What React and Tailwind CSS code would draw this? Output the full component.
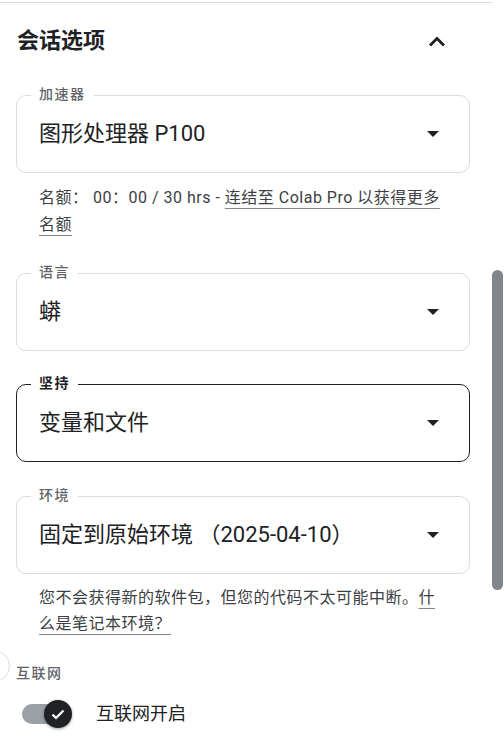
const FONT = { fontFamily: "Roboto, 'Noto Sans CJK SC', sans-serif" };

function DropArrow() {
  return (
    <svg width="14" height="8" viewBox="0 0 14 8" className="shrink-0">
      <path d="M1 1h12L7 7z" fill="#202124" />
    </svg>
  );
}

function Field({ label, value, active }) {
  return (
    <div
      className={
        'relative h-[78px] rounded-[10px] border flex items-center justify-between pl-[22px] pr-[29px] ' +
        (active ? 'border-[#202124]' : 'border-[#dadce0]')
      }
    >
      <span
        className={
          'absolute left-[14px] top-[-11px] bg-white px-2 text-[14px] leading-[18px] tracking-[1.5px] ' +
          (active ? 'text-[#202124] font-bold' : 'text-[#5f6368] font-medium')
        }
      >
        {label}
      </span>
      <span className="text-[22px] leading-[28px] text-[#202124]">{value}</span>
      <DropArrow />
    </div>
  );
}

export default function App() {
  return (
    <div className="relative w-[504px] h-[738px] overflow-hidden bg-white" style={FONT}>
      <div className="mt-[2px] h-px w-[492px] bg-[#dadce0]" />

      <div className="mt-[24px] h-[28px] flex items-center justify-between pl-[17px] pr-[55px]">
        <h2 className="text-[22px] leading-[28px] font-bold text-[#202124]">会话选项</h2>
        <svg width="24" height="24" viewBox="0 0 24 24">
          <path d="M5 16.5l7-7 7 7" fill="none" stroke="#202124" strokeWidth="2.8" />
        </svg>
      </div>

      <div className="pl-[16px] pr-[34px]">
        <div className="mt-[40px]">
          <Field label="加速器" value="图形处理器 P100" />
        </div>
        <p className="mt-[11px] px-[23px] text-[16px] leading-[27px] tracking-[0.5px] text-[#3c4043]">
          名额： 00：00 / 30 hrs -{' '}
          <span className="underline decoration-[#80868b] underline-offset-[5px]">连结至 Colab Pro 以获得更多名额</span>
        </p>

        <div className="mt-[35px]">
          <Field label="语言" value="蟒" />
        </div>
        <div className="mt-[33px]">
          <Field label="坚持" value="变量和文件" active />
        </div>
        <div className="mt-[34px]">
          <Field label="环境" value="固定到原始环境 （2025-04-10）" />
        </div>
        <p className="mt-[11px] px-[23px] text-[16px] leading-[26px] tracking-[0.5px] text-[#3c4043]">
          您不会获得新的软件包，但您的代码不太可能中断。
          <span className="underline decoration-[#80868b] underline-offset-[5px]">什么是笔记本环境？</span>
        </p>
      </div>

      <div className="mt-[27px] pl-[16px] text-[14px] leading-[18px] tracking-[1.5px] font-medium text-[#5f6368]">
        互联网
      </div>

      <div className="mt-[18px] flex items-center pl-[22px]">
        <div className="relative w-[50px] h-[28px]">
          <div className="absolute left-0 top-[4px] w-[44px] h-[20px] rounded-full bg-[#9aa0a6]" />
          <div className="absolute left-[22px] top-0 w-[28px] h-[28px] rounded-full bg-[#202124] shadow-[0_1px_3px_rgba(0,0,0,0.4)] flex items-center justify-center">
            <svg width="16" height="16" viewBox="0 0 16 16">
              <path d="M2.5 8.5l3.5 3.5 7.5-7.5" fill="none" stroke="#fff" strokeWidth="2.2" />
            </svg>
          </div>
        </div>
        <span className="ml-[24px] text-[18px] leading-[28px] text-[#202124]">互联网开启</span>
      </div>

      <div className="absolute left-[-22px] top-[650px] w-[32px] h-[32px] rounded-full border border-[#dadce0] bg-white" />
      <div className="absolute left-[492px] top-[270px] w-[11px] h-[320px] rounded-full bg-[#80868b]" />
    </div>
  );
}
